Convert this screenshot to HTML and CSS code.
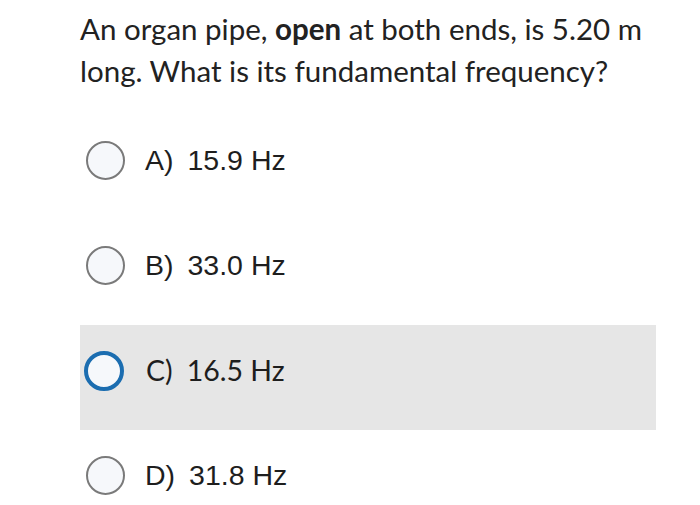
FILE: index.html
```html
<!DOCTYPE html>
<html>
<head>
<meta charset="utf-8">
<link rel="stylesheet" href="styles.css">
</head>
<body>
<div class="quiz">
  <p class="question">An organ pipe, <b>open</b> at both ends, is 5.20 m long. What is its fundamental frequency?</p>
  <div class="answers">
    <div class="answer">
      <span class="radio"></span>
      <span class="label"><span class="letter">A)</span>15.9 Hz</span>
    </div>
    <div class="answer">
      <span class="radio"></span>
      <span class="label"><span class="letter">B)</span>33.0 Hz</span>
    </div>
    <div class="answer answer-hover">
      <span class="radio radio-focus"></span>
      <span class="label label-lato"><span class="letter">C)</span>16.5 Hz</span>
    </div>
    <div class="answer answer-last">
      <span class="radio"></span>
      <span class="label"><span class="letter">D)</span>31.8 Hz</span>
    </div>
  </div>
</div>
</body>
</html>
```

FILE: styles.css
```css
html, body {
  margin: 0;
  padding: 0;
  background: #ffffff;
}

.quiz {
  width: 576px;
  padding: 8px 0 0 80px;
  color: #222222;
  font-family: Lato, "Open Sans", sans-serif;
}

.question {
  margin: 0;
  font-size: 29.5px;
  line-height: 42px;
}

.question b {
  font-weight: 700;
}

.answers {
  margin-top: 23px;
  display: flex;
  flex-direction: column;
}

.answer {
  height: 105px;
  display: flex;
  align-items: flex-start;
  padding-top: 26px;
  box-sizing: border-box;
}

.answer-last {
  height: 80px;
}

.answer-hover {
  background: #e6e6e6;
}

.radio {
  width: 35px;
  height: 35px;
  margin-left: 6px;
  border: 2px solid #7a7a7a;
  border-radius: 50%;
  background: #f6f8fb;
  flex: none;
}

.radio-focus {
  width: 32px;
  height: 32px;
  margin-left: 4px;
  border: 4px solid #1b6db0;
}

.label {
  margin-left: 20px;
  margin-top: 3px;
  font-family: "Liberation Sans", Arial, sans-serif;
  font-size: 28.5px;
  line-height: 32px;
  color: #1e1e1e;
}

.label-lato {
  font-family: Lato, sans-serif;
  margin-left: 22px;
}

.letter {
  margin-right: 14px;
}
```
